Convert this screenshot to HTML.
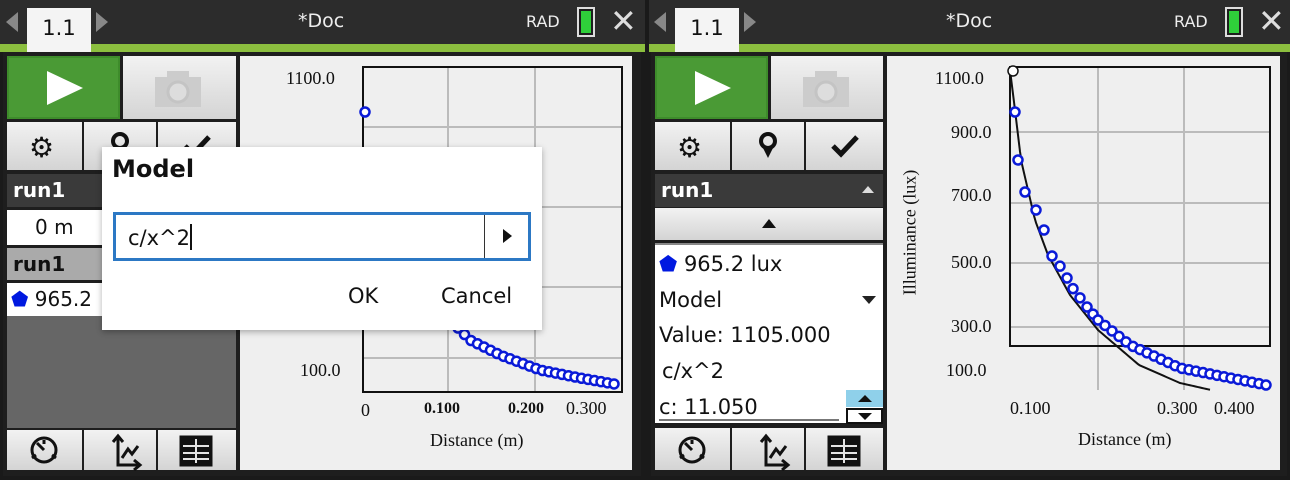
<!DOCTYPE html>
<html><head><meta charset="utf-8"><style>
*{margin:0;padding:0;box-sizing:border-box}
body{width:1290px;height:480px;background:#1a1a1a;position:relative;overflow:hidden;font-family:"DejaVu Sans","Liberation Sans",sans-serif}
.a{position:absolute}
.hdr{background:#2c2c2c;height:46px;top:0}
.green{background:#8cbf3f;height:8px;top:44px}
.frame{background:#1e1e1e;top:52px;height:424px}
.tab{background:#f4f4f4;top:8px;height:44px;width:64px;font-size:21px;text-align:center;line-height:40px;color:#111}
.arr{width:0;height:0;border-top:10px solid transparent;border-bottom:10px solid transparent;top:12px}
.t{color:#eee;font-size:19px}
.btn{background:linear-gradient(#f2f2f2,#d4d4d4)}
.dark{background:#3a3a3a;color:#fff;font-weight:bold;font-size:20px;padding-left:6px;line-height:33px}
.row{background:#fff;font-size:20px;color:#111}
.serif{font-family:"Liberation Serif","DejaVu Serif",serif;color:#111;font-size:18px}
</style></head><body>

<!-- ===== LEFT SCREEN ===== -->
<div class="a hdr" style="left:0;width:645px"></div>
<div class="a green" style="left:0;width:645px"></div>
<div class="a frame" style="left:3px;width:638px"></div>
<div class="a arr" style="left:6px;border-right:12px solid #888"></div>
<div class="a tab" style="left:27px">1.1</div>
<div class="a arr" style="left:96px;border-left:12px solid #888"></div>
<div class="a t" style="left:298px;top:10px">*Doc</div>
<div class="a t" style="left:526px;top:12px;font-size:16px">RAD</div>
<div class="a" style="left:577px;top:7px;width:18px;height:30px;border:2px solid #ddd;background:#1e1e1e"><div style="margin:2px;height:22px;background:#2fcf3a"></div></div>
<div class="a t" style="left:610px;top:2px;font-size:32px;font-weight:100;color:#ddd">✕</div>

<div class="a" style="left:7px;top:56px;width:113px;height:63px;background:#4a9a35;border:2px solid #3e8c2b"></div>
<svg class="a" style="left:45px;top:69px" width="40" height="38"><polygon points="2,2 38,19 2,36" fill="#fff"/></svg>
<div class="a btn" style="left:123px;top:56px;width:113px;height:63px"></div>
<svg class="a" style="left:155px;top:71px" width="46" height="36"><rect x="0" y="6" width="46" height="30" fill="#ccc"/><rect x="12" y="0" width="22" height="8" fill="#ccc"/><circle cx="23" cy="21" r="10" fill="#ddd" stroke="#c4c4c4" stroke-width="3"/></svg>
<div class="a btn" style="left:7px;top:122px;width:75px;height:48px"></div>
<div class="a btn" style="left:84px;top:122px;width:72px;height:48px"></div>
<div class="a btn" style="left:158px;top:122px;width:78px;height:48px"></div>
<div class="a" style="left:29px;top:131px;font-size:28px;color:#111">⚙</div>
<svg class="a" style="left:109px;top:131px" width="22" height="30"><circle cx="11" cy="10" r="7" fill="none" stroke="#111" stroke-width="4"/><path d="M5 15 L11 27 L17 15" fill="#111"/></svg>
<svg class="a" style="left:182px;top:134px" width="30" height="24"><path d="M3 12 L11 20 L27 3" fill="none" stroke="#111" stroke-width="5"/></svg>
<div class="a dark" style="left:7px;top:174px;width:229px;height:33px">run1</div>
<div class="a row" style="left:7px;top:210px;width:229px;height:35px;padding-left:28px;line-height:35px">0 m</div>
<div class="a dark" style="left:7px;top:248px;width:229px;height:32px;background:#aaa;color:#111">run1</div>
<div class="a row" style="left:7px;top:283px;width:229px;height:33px;line-height:33px;padding-left:4px"><span style="color:#0019e0">⬟</span> 965.2</div>
<div class="a" style="left:7px;top:316px;width:229px;height:112px;background:#666"></div>
<div class="a btn" style="left:7px;top:430px;width:75px;height:40px"></div>
<div class="a btn" style="left:84px;top:430px;width:72px;height:40px"></div>
<div class="a btn" style="left:158px;top:430px;width:78px;height:40px"></div>

<div class="a" style="left:240px;top:56px;width:392px;height:414px;background:#efefef"></div>
<svg class="a" id="pl" style="left:240px;top:56px" width="392" height="414"></svg>
<div class="a serif" style="left:286px;top:68px">1100.0</div>
<div class="a serif" style="left:300px;top:360px">100.0</div>
<div class="a serif" style="left:361px;top:400px">0</div>
<div class="a serif" style="left:424px;top:400px;font-weight:bold;font-size:16px">0.100</div>
<div class="a serif" style="left:508px;top:400px;font-weight:bold;font-size:16px">0.200</div>
<div class="a serif" style="left:566px;top:398px">0.300</div>
<div class="a serif" style="left:430px;top:430px">Distance (m)</div>

<!-- dialog -->
<div class="a" style="left:102px;top:147px;width:440px;height:183px;background:#fff;box-shadow:0 2px 6px rgba(0,0,0,.3)"></div>
<div class="a" style="left:112px;top:155px;font-size:24px;font-weight:bold;color:#111">Model</div>
<div class="a" style="left:113px;top:212px;width:418px;height:49px;border:3px solid #2c78c4;background:#fff"></div>
<div class="a" style="left:484px;top:215px;width:1px;height:43px;background:#333"></div>
<svg class="a" style="left:503px;top:229px" width="10" height="14"><polygon points="0,0 9,7 0,14" fill="#111"/></svg>
<div class="a" style="left:128px;top:224px;font-size:21px;color:#111">c/x^2<span style="display:inline-block;width:2px;height:26px;background:#111;vertical-align:-5px"></span></div>
<div class="a" style="left:348px;top:284px;font-size:21px;color:#111">OK</div>
<div class="a" style="left:441px;top:284px;font-size:21px;color:#111">Cancel</div>

<!-- ===== RIGHT SCREEN ===== -->
<div class="a hdr" style="left:649px;width:641px"></div>
<div class="a green" style="left:649px;width:641px"></div>
<div class="a frame" style="left:651px;width:636px"></div>
<div class="a arr" style="left:654px;border-right:12px solid #888"></div>
<div class="a tab" style="left:675px">1.1</div>
<div class="a arr" style="left:744px;border-left:12px solid #888"></div>
<div class="a t" style="left:946px;top:10px">*Doc</div>
<div class="a t" style="left:1174px;top:12px;font-size:16px">RAD</div>
<div class="a" style="left:1225px;top:7px;width:18px;height:30px;border:2px solid #ddd;background:#1e1e1e"><div style="margin:2px;height:22px;background:#2fcf3a"></div></div>
<div class="a t" style="left:1258px;top:2px;font-size:32px;color:#ddd">✕</div>

<div class="a" style="left:655px;top:56px;width:113px;height:63px;background:#4a9a35;border:2px solid #3e8c2b"></div>
<svg class="a" style="left:693px;top:69px" width="40" height="38"><polygon points="2,2 38,19 2,36" fill="#fff"/></svg>
<div class="a btn" style="left:771px;top:56px;width:112px;height:63px"></div>
<svg class="a" style="left:803px;top:71px" width="46" height="36"><rect x="0" y="6" width="46" height="30" fill="#ccc"/><rect x="12" y="0" width="22" height="8" fill="#ccc"/><circle cx="23" cy="21" r="10" fill="#ddd" stroke="#c4c4c4" stroke-width="3"/></svg>
<div class="a btn" style="left:655px;top:122px;width:75px;height:48px"></div>
<div class="a btn" style="left:732px;top:122px;width:72px;height:48px"></div>
<div class="a btn" style="left:806px;top:122px;width:77px;height:48px"></div>
<div class="a" style="left:677px;top:131px;font-size:28px;color:#111">⚙</div>
<svg class="a" style="left:757px;top:131px" width="22" height="30"><circle cx="11" cy="10" r="7" fill="none" stroke="#111" stroke-width="4"/><path d="M5 15 L11 27 L17 15" fill="#111"/></svg>
<svg class="a" style="left:830px;top:134px" width="30" height="24"><path d="M3 12 L11 20 L27 3" fill="none" stroke="#111" stroke-width="5"/></svg>
<div class="a dark" style="left:655px;top:174px;width:228px;height:33px">run1</div>
<svg class="a" style="left:862px;top:186px" width="12" height="8"><polygon points="0,7 6,0 12,7" fill="#ddd"/></svg>
<div class="a btn" style="left:655px;top:208px;width:228px;height:32px"></div>
<svg class="a" style="left:762px;top:219px" width="14" height="9"><polygon points="0,9 7,0 14,9" fill="#111"/></svg>
<div class="a row" style="left:655px;top:243px;width:228px;height:180px;border-top:2px solid #888"></div>
<div class="a" style="left:659px;top:252px;font-size:21px;color:#111"><span style="color:#0019e0">⬟</span> 965.2 lux</div>
<div class="a" style="left:659px;top:288px;font-size:21px;color:#111">Model</div>
<svg class="a" style="left:862px;top:296px" width="14" height="8"><polygon points="0,0 14,0 7,8" fill="#222"/></svg>
<div class="a" style="left:659px;top:323px;font-size:21px;color:#111">Value: 1105.000</div>
<div class="a" style="left:662px;top:359px;font-size:21px;color:#111">c/x^2</div>
<div class="a" style="left:659px;top:395px;font-size:21px;color:#111;border-bottom:2px solid #777;width:180px">c: 11.050</div>
<div class="a" style="left:846px;top:390px;width:37px;height:17px;background:#8fd0ea"></div>
<svg class="a" style="left:858px;top:395px" width="14" height="7"><polygon points="0,7 7,0 14,7" fill="#111"/></svg>
<div class="a" style="left:846px;top:408px;width:37px;height:16px;border:2px solid #111;background:#fff"></div>
<svg class="a" style="left:858px;top:413px" width="14" height="7"><polygon points="0,0 14,0 7,7" fill="#111"/></svg>
<div class="a btn" style="left:655px;top:428px;width:75px;height:42px"></div>
<div class="a btn" style="left:732px;top:428px;width:72px;height:42px"></div>
<div class="a btn" style="left:806px;top:428px;width:77px;height:42px"></div>

<div class="a" style="left:887px;top:56px;width:393px;height:414px;background:#efefef"></div>
<svg class="a" id="pr" style="left:887px;top:56px" width="393" height="414"></svg>
<div class="a serif" style="left:935px;top:68px">1100.0</div>
<div class="a serif" style="left:951px;top:122px">900.0</div>
<div class="a serif" style="left:951px;top:185px">700.0</div>
<div class="a serif" style="left:951px;top:252px">500.0</div>
<div class="a serif" style="left:951px;top:316px">300.0</div>
<div class="a serif" style="left:946px;top:360px">100.0</div>
<div class="a serif" style="left:1010px;top:398px">0.100</div>
<div class="a serif" style="left:1157px;top:398px">0.300</div>
<div class="a serif" style="left:1214px;top:398px">0.400</div>
<div class="a serif" style="left:1078px;top:429px">Distance (m)</div>
<div class="a serif" style="left:830px;top:222px;width:160px;text-align:center;transform:rotate(-90deg)">Illuminance (lux)</div>

<!-- bottom icons -->
<svg class="a" style="left:0;top:0" width="1290" height="480">
 <g fill="none" stroke="#111" stroke-width="3">
  <circle cx="44" cy="450" r="12"/><path d="M44 450 L37 443 M36 455 L32 458 M52 455 L56 458 M44 440 L44 444"/>
  <path d="M118 437 L118 465 L139 465 M113 442 L118 436 L123 442 M134 460 L140 465 L134 470 M122 458 L128 449 L132 454 L138 446"/>
  <rect x="181" y="437" width="30" height="28" fill="#111"/>
 </g>
 <path d="M183 446 H209 M183 453 H209 M183 459 H209 M196 439 V463" stroke="#e4e4e4" stroke-width="2"/>
 <g transform="translate(648,0)" fill="none" stroke="#111" stroke-width="3">
  <circle cx="44" cy="450" r="12"/><path d="M44 450 L37 443 M36 455 L32 458 M52 455 L56 458 M44 440 L44 444"/>
  <path d="M118 437 L118 465 L139 465 M113 442 L118 436 L123 442 M134 460 L140 465 L134 470 M122 458 L128 449 L132 454 L138 446"/>
  <rect x="181" y="437" width="30" height="28" fill="#111"/>
  <path d="M183 446 H209 M183 453 H209 M183 459 H209 M196 439 V463" stroke="#e4e4e4" stroke-width="2"/>
 </g>
 <circle cx="1013" cy="71" r="5" fill="#fff" stroke="#111" stroke-width="1.5"/>
</svg>

<script>
var NS="http://www.w3.org/2000/svg";
function el(svg,t,a){var e=document.createElementNS(NS,t);for(var k in a)e.setAttribute(k,a[k]);svg.appendChild(e);return e;}
function interp(A,x){for(var i=0;i<A.length-1;i++){if(x<=A[i+1][0]){var t=(x-A[i][0])/(A[i+1][0]-A[i][0]);return A[i][1]+t*(A[i+1][1]-A[i][1]);}}return A[A.length-1][1];}
// left plot
var L=document.getElementById('pl');
[[448,67,448,392],[535,67,535,392],[363,127,622,127],[363,207,622,207],[363,287,622,287],[363,358,622,358]].forEach(function(g){el(L,'line',{x1:g[0]-240,y1:g[1]-56,x2:g[2]-240,y2:g[3]-56,stroke:'#bbb','stroke-width':2});});
el(L,'rect',{x:123,y:11,width:259,height:325,fill:'none',stroke:'#111','stroke-width':2});
el(L,'circle',{cx:125,cy:56,r:4.5,fill:'#fff',stroke:'#0a1ad8','stroke-width':2.5});
var LA=[[455,325],[470,340],[500,355],[540,370],[580,378],[620,385]];
for(var x=458;x<=620;x+=6.5){el(L,'circle',{cx:x-240,cy:interp(LA,x)-56,r:4.5,fill:'#fff',stroke:'#0a1ad8','stroke-width':2.5});}
// right plot
var R=document.getElementById('pr');
[[1098,67,1098,390],[1184,67,1184,390],[1010,132,1270,132],[1010,203,1270,203],[1010,263,1270,263],[1010,327,1270,327]].forEach(function(g){el(R,'line',{x1:g[0]-887,y1:g[1]-56,x2:g[2]-887,y2:g[3]-56,stroke:'#bbb','stroke-width':2});});
el(R,'rect',{x:123,y:11,width:260,height:279,fill:'none',stroke:'#111','stroke-width':2});
var MA=[[1010,70],[1015,110],[1021,160],[1035,220],[1048,255],[1070,295],[1098,330],[1139,365],[1180,383],[1211,390]];
var d='';for(var x=1010;x<=1211;x+=2){d+=(d?'L':'M')+(x-887)+' '+(interp(MA,x)-56);}
el(R,'path',{d:d,fill:'none',stroke:'#111','stroke-width':2});
var PA=[[1015,112],[1018,160],[1025,192],[1036,210],[1044,230],[1052,256],[1063,270],[1071,286],[1087,307],[1098,320],[1130,345],[1180,368],[1266,385]];
var xs=[1015,1018,1025,1036,1044,1052,1060,1067,1073,1080,1087,1093,1098];
for(var x=1105;x<=1266;x+=7)xs.push(x);
xs.forEach(function(x){el(R,'circle',{cx:x-887,cy:interp(PA,x)-56,r:4.5,fill:'#fff',stroke:'#0a1ad8','stroke-width':2.5});});
</script>
</body></html>
